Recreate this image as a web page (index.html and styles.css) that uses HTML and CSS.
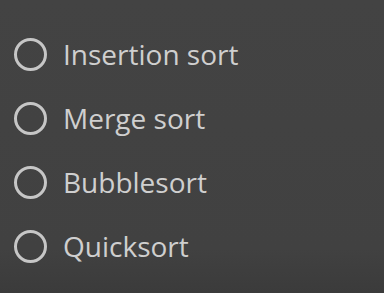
FILE: index.html
```html
<!DOCTYPE html>
<html lang="en">
<head>
  <meta charset="UTF-8">
  <title>Sort options</title>
  <link rel="stylesheet" href="styles.css">
</head>
<body>
  <div class="options">
    <label class="option"><span class="radio"></span><span class="text">Insertion sort</span></label>
    <label class="option"><span class="radio"></span><span class="text">Merge sort</span></label>
    <label class="option"><span class="radio"></span><span class="text">Bubblesort</span></label>
    <label class="option"><span class="radio"></span><span class="text">Quicksort</span></label>
  </div>
</body>
</html>
```

FILE: styles.css
```css
html, body {
  height: 100%;
}
body {
  margin: 0;
  background: linear-gradient(#434343, #414141 85%, #3b3b3b);
  font-family: "Open Sans", sans-serif;
  color: #cfcfcf;
}
.options {
  display: flex;
  flex-direction: column;
  padding: 22px 0 0 14px;
}
.option {
  display: flex;
  align-items: center;
  height: 64px;
}
.radio {
  width: 27px;
  height: 27px;
  border: 3px solid #c6c6c6;
  border-radius: 50%;
  flex-shrink: 0;
}
.text {
  margin-left: 16px;
  font-size: 28px;
  line-height: 1;
}
```
